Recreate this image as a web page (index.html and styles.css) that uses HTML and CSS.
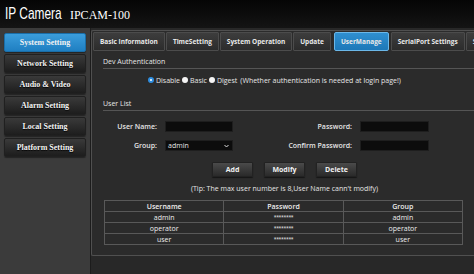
FILE: index.html
```html
<!DOCTYPE html>
<html lang="en">
<head>
    <meta charset="UTF-8">
    <meta name="viewport" content="width=device-width, initial-scale=1.0">
    <title>IP Camera</title>
    <link rel="stylesheet" href="styles.css">
</head>
<body>
    <div class="header">
        <span class="brand">IP Camera</span>
        <span class="model">IPCAM-100</span>
    </div>

    <div class="layout">
        <div class="sidebar">
            <div class="menu-item active">System Setting</div>
            <div class="menu-item">Network Setting</div>
            <div class="menu-item">Audio &amp; Video</div>
            <div class="menu-item">Alarm Setting</div>
            <div class="menu-item">Local Setting</div>
            <div class="menu-item">Platform Setting</div>
        </div>

        <div class="main">
            <div class="panel">
                <div class="tabs">
                    <span class="tab">Basic Information</span>
                    <span class="tab">TimeSetting</span>
                    <span class="tab">System Operation</span>
                    <span class="tab">Update</span>
                    <span class="tab active">UserManage</span>
                    <span class="tab">SerialPort Settings</span>
                    <span class="tab">SD Card</span>
                </div>

                <div class="content">
                    <div class="section-title">Dev Authentication</div>
                    <div class="radio-row">
                        <span class="radio checked"></span>Disable
                        <span class="radio"></span>Basic
                        <span class="radio"></span>Digest
                        <span class="hint">(Whether authentication is needed at login page!)</span>
                    </div>

                    <div class="section-title">User List</div>
                    <div class="user-form">
                        <div class="form-grid">
                            <label class="label">User Name:</label>
                            <span class="field"></span>
                            <label class="label">Password:</label>
                            <span class="field"></span>

                            <label class="label">Group:</label>
                            <span class="field select">
                                admin
                                <svg class="chevron" width="5" height="4" viewBox="0 0 5 4"><path d="M0.5 1 L2.5 3 L4.5 1" fill="none" stroke="#ddd" stroke-width="1"/></svg>
                            </span>
                            <label class="label">Confirm Password:</label>
                            <span class="field"></span>
                        </div>

                        <div class="buttons">
                            <button class="btn">Add</button>
                            <button class="btn">Modify</button>
                            <button class="btn">Delete</button>
                        </div>

                        <div class="tip">(Tip: The max user number is 8,User Name cann't modify)</div>

                        <table class="user-table">
                            <tr><th>Username</th><th>Password</th><th>Group</th></tr>
                            <tr><td>admin</td><td class="stars">********</td><td>admin</td></tr>
                            <tr><td>operator</td><td class="stars">********</td><td>operator</td></tr>
                            <tr><td>user</td><td class="stars">********</td><td>user</td></tr>
                        </table>
                    </div>
                </div>
            </div>
        </div>
    </div>
</body>
</html>
```

FILE: styles.css
```css
* {
    margin: 0;
    padding: 0;
    box-sizing: border-box;
}

body {
    width: 474px;
    height: 274px;
    overflow: hidden;
    background: #2a2a2a;
    font-family: 'Open Sans', sans-serif;
    color: #e6e6e6;
}

.header {
    height: 28px;
    background: linear-gradient(#050505, #141414);
    display: flex;
    align-items: baseline;
    padding: 4px 0 0 5px;
}

.brand {
    display: inline-block;
    font-family: 'Liberation Sans', sans-serif;
    font-size: 17px;
    color: #fff;
    transform: scaleX(0.7);
    transform-origin: left;
    margin-right: -16px;
}

.model {
    font-family: 'Liberation Serif', serif;
    font-size: 12px;
    color: #fff;
}

.layout {
    display: flex;
    height: 246px;
}

.sidebar {
    flex-shrink: 0;
    width: 90px;
    background: #3b3b3b;
    padding: 5px 4px 0 4px;
    display: flex;
    flex-direction: column;
    gap: 2px;
}

.menu-item {
    height: 19px;
    line-height: 17px;
    text-align: center;
    white-space: nowrap;
    font-family: 'Liberation Serif', serif;
    font-size: 8px;
    font-weight: bold;
    color: #f2f2f2;
    background: linear-gradient(#3a3a3a, #1d1d1d);
    border: 1px solid #202020;
    border-radius: 2px;
    box-shadow: 0 1px 1px rgba(0, 0, 0, 0.4);
    text-shadow: 0 1px 1px #000;
}

.menu-item.active {
    background: linear-gradient(#3b9ddb, #1f7fc2);
    border-color: #1a6ea8;
    text-shadow: none;
}

.main {
    flex: 1;
    min-width: 0;
    border-left: 1px solid #1c1c1c;
    padding: 2px 0 0 0;
    background: #282828;
}

.panel {
    border: 1px solid #505050;
    border-right: none;
    border-radius: 2px 0 0 2px;
    background: #2b2b2b;
    padding: 1px 0 10px 1px;
}

.tabs {
    display: flex;
    gap: 1px;
    white-space: nowrap;
    overflow: hidden;
}

.tab {
    flex-shrink: 0;
    height: 19px;
    line-height: 17px;
    padding: 0 6px;
    font-size: 6.5px;
    font-weight: bold;
    color: #e8e8e8;
    background: linear-gradient(#3d3d3d, #2c2c2c);
    border: 1px solid #4c4c4c;
    border-radius: 1px;
}

.tab.active {
    background: linear-gradient(#2f8fd0, #1d78b8);
    border-color: #6bb7e8;
    border-radius: 2px;
    margin: 0 1px 0 2px;
}

.content {
    padding: 4px 0 0 10px;
    font-size: 7px;
}

.section-title {
    height: 14px;
    line-height: 14px;
    border-bottom: 1px solid #555;
}

.radio-row {
    display: flex;
    align-items: center;
    height: 12px;
    margin: 5px 0 11px 45px;
}

.radio {
    width: 6px;
    height: 6px;
    border-radius: 50%;
    background: #f4f4f4;
    margin: 0 2px 0 2px;
}

.radio.checked {
    background: #fff;
    border: 2px solid #2f8ee0;
    margin-left: 0;
}

.hint {
    margin-left: 3px;
}

.user-form {
    width: 361px;
}

.form-grid {
    display: grid;
    grid-template-columns: 54px 68px 111px 69px;
    column-gap: 8px;
    row-gap: 8px;
    margin-top: 10px;
    align-items: center;
}

.label {
    text-align: right;
    font-weight: 600;
}

.field {
    height: 11px;
    background: #0c0c0c;
    border: 1px solid #1e1e1e;
}

.select {
    display: flex;
    align-items: center;
    justify-content: space-between;
    padding: 0 3px 0 2px;
}

.buttons {
    display: flex;
    justify-content: center;
    gap: 11px;
    margin-top: 11px;
    padding-left: 2px;
}

.btn {
    width: 41px;
    height: 15px;
    font-family: 'Open Sans', sans-serif;
    font-size: 7px;
    font-weight: bold;
    color: #f0f0f0;
    background: linear-gradient(#4a4a4a, #2a2a2a);
    border: 1px solid #222;
    border-radius: 1px;
    box-shadow: 0 1px 1px rgba(0, 0, 0, 0.5);
}

.tip {
    text-align: center;
    height: 10px;
    line-height: 10px;
    margin-top: 7px;
    padding-left: 2px;
}

.user-table {
    width: 359px;
    margin: 6px 0 0 1px;
    border-collapse: collapse;
    table-layout: fixed;
    font-size: 7px;
}

.user-table th,
.user-table td {
    height: 11px;
    padding: 0;
    border: 1px solid #595959;
    text-align: center;
    font-weight: normal;
    line-height: 9px;
    color: #eeeeee;
}

.user-table th {
    font-weight: 600;
}

.user-table td.stars {
    font-size: 5px;
    letter-spacing: -0.3px;
}
```
